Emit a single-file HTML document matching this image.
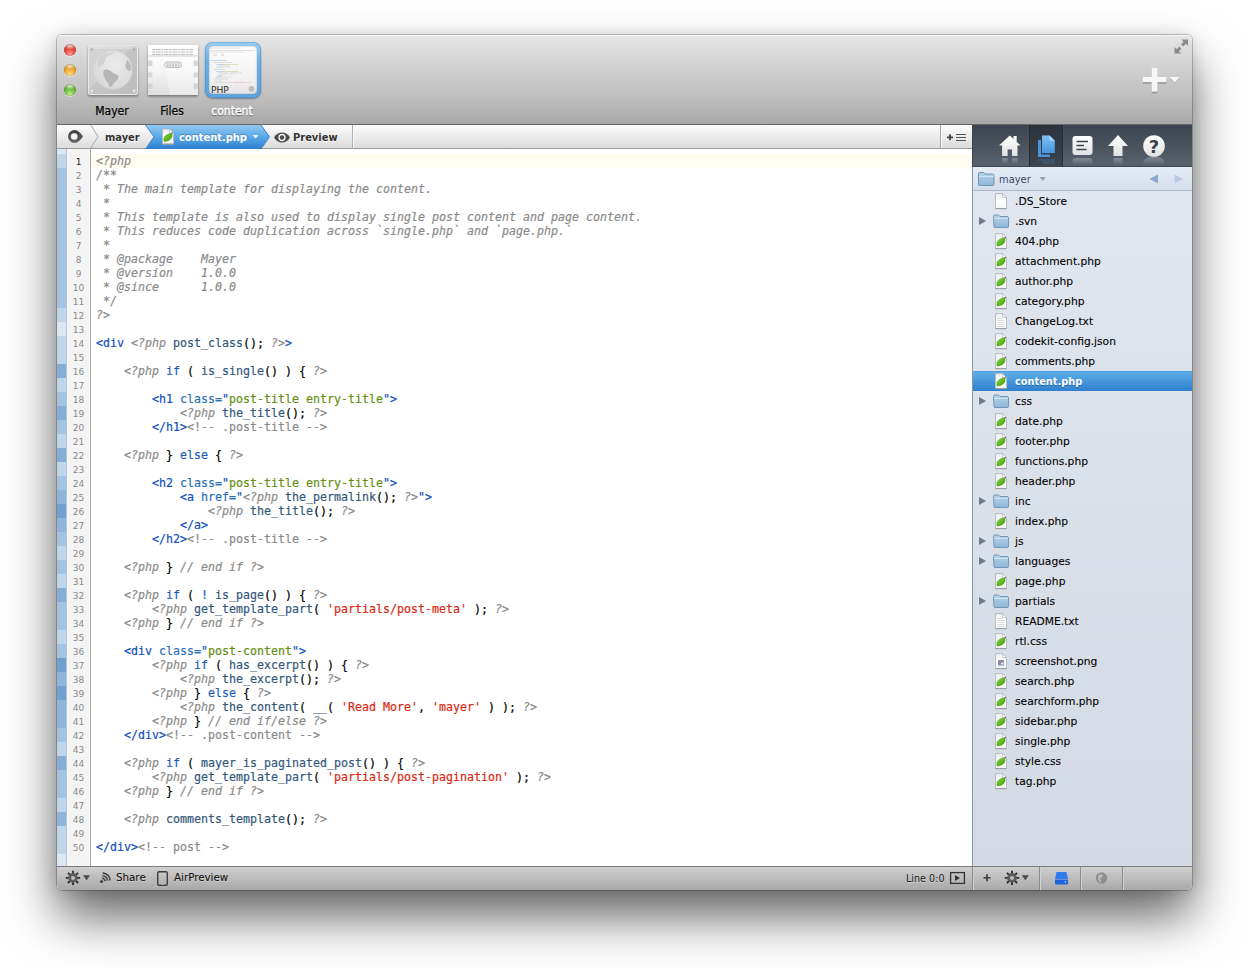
<!DOCTYPE html>
<html lang="en">
<head>
<meta charset="utf-8">
<title>Coda 2 – content.php</title>
<style>
html,body{margin:0;padding:0}
body{width:1249px;height:969px;background:#fff;position:relative;overflow:hidden;font-family:"DejaVu Sans Condensed","DejaVu Sans","Liberation Sans",sans-serif;font-size:12px;color:#111}
#shadow{position:absolute;left:57px;top:35px;width:1135px;height:855px;border-radius:5px;
  box-shadow:0 0 0 1px rgba(0,0,0,.21),0 27px 50px rgba(0,0,0,.6),0 2px 16px rgba(0,0,0,.13)}
#win{position:absolute;left:57px;top:35px;width:1135px;height:855px;border-radius:5px;overflow:hidden;background:#fff}
#win *{box-sizing:border-box}
.abs{position:absolute}
/* toolbar */
#toolbar{position:absolute;left:0;top:0;width:1135px;height:90px;background:linear-gradient(#e6e6e6,#d9d9d9 22%,#bdbdbd 72%,#a8a8a8);border-bottom:1px solid #666;box-shadow:inset 0 1px 0 #f6f6f6}
.tl{position:absolute;left:7px;width:12px;height:12px;border-radius:50%;box-shadow:0 1px 0 rgba(255,255,255,.45),inset 0 0 1px rgba(0,0,0,.5)}
.lbl{position:absolute;top:69px;font-size:12px;line-height:14px;text-align:center;width:70px;color:#000;-webkit-text-stroke:.25px #000;text-shadow:0 1px 0 rgba(255,255,255,.4)}
/* path bar */
#pathbar{position:absolute;left:0;top:90px;width:916px;height:24px;background:linear-gradient(#fcfcfc,#ececec 50%,#dcdcdc);border-bottom:1px solid #9a9a9a;font-weight:bold;font-size:11px}
.pb{top:0;line-height:25px;font-size:11px;font-weight:bold;font-family:"DejaVu Sans Condensed","DejaVu Sans",sans-serif}
/* editor */
#editor{position:absolute;left:0;top:114px;width:916px;height:717px;background:#fff}
#bar{position:absolute;left:0;top:0;width:9px;height:717px;background:#dbe7f3}
#bar i{display:block;height:14px}
#bar .pad{height:5px;background:#dbe7f3}
#nums{position:absolute;left:9px;top:0;width:25px;height:717px;background:#f4f4f4;border-right:1px solid #a9a9a9;border-left:1px solid #b3c7db;padding-top:5px}
#nums b{display:block;height:14px;line-height:16px;font-weight:normal;font-size:9px;text-align:center;color:#8a8a8a;font-family:"DejaVu Sans","Liberation Sans",sans-serif}
#nums b.cur{color:#222}
#code{position:absolute;left:34px;top:5px;width:882px;font-family:"DejaVu Sans Mono","Liberation Mono",monospace;font-size:11.63px;line-height:14px;color:#000;-webkit-text-stroke:.2px}
#code .ln{height:14px;padding-left:5px;white-space:pre}
#code .hl{background:#fffdf0}
.p{color:#8a8a8a;font-style:italic}
.c{color:#8a8a8a}
.t{color:#1050bc}
.a{color:#2a70b8}
.s{color:#668f14}
.k{color:#1c5cc0}
.f{color:#33587a}
.b{color:#000}
.r{color:#dc2a12}
/* sidebar */
#side{position:absolute;left:915px;top:90px;width:220px;height:741px;background:linear-gradient(#e2e7ef,#d3dae3);border-left:1px solid #8e959d}
#sidehead{position:absolute;left:-1px;top:0;width:220px;height:42px;border-left:1px solid #3a424c;background:linear-gradient(#3d4550,#49525d 50%,#5a6470);box-shadow:inset 0 -1px 0 #3b434d}
#crumb{position:absolute;left:0;top:42px;width:219px;height:24px;background:linear-gradient(#e6ecf5,#d4deec);border-bottom:1px solid #a9b8cc;color:#3a4a66;font-size:12px}
#files{position:absolute;left:0;top:66px;width:219px}
.row{position:relative;height:20px;line-height:21px;font-family:"DejaVu Sans","Liberation Sans",sans-serif;font-size:10.7px;color:#000;-webkit-text-stroke:.1px #000;white-space:nowrap}
.row span{position:absolute;left:42px;top:0}
.row .ic{position:absolute;left:19px;top:1px}
.row em{position:absolute;left:6px;top:6px;width:0;height:0;border-left:7.5px solid #6f7a8a;border-top:4.5px solid transparent;border-bottom:4.5px solid transparent}
.row.sel{background:linear-gradient(#5fb0ea,#2f7fd0);color:#fff;-webkit-text-stroke:0;font-weight:bold;font-family:"DejaVu Sans Condensed","DejaVu Sans",sans-serif;font-size:10.9px;text-shadow:0 1px 0 rgba(0,0,0,.3);box-shadow:inset 0 1px 0 #4a9ddf}
/* status */
#status{position:absolute;left:0;top:831px;width:1135px;height:24px;background:linear-gradient(#cfcfcf,#a9a9a9);border-top:1px solid #7d7d7d;font-size:11px;color:#222}
.st{top:0;line-height:20px;font-family:"DejaVu Sans","Liberation Sans",sans-serif;font-size:10.3px;color:#111;-webkit-text-stroke:.08px #111;text-shadow:0 1px 0 rgba(255,255,255,.35)}
</style>
</head>
<body>
<svg width="0" height="0" style="position:absolute">
<defs>
<linearGradient id="gfold" x1="0" y1="0" x2="0" y2="1"><stop offset="0" stop-color="#b7d3e8"/><stop offset="1" stop-color="#8fb6d6"/></linearGradient>
<linearGradient id="gpage" x1="0" y1="0" x2="0" y2="1"><stop offset="0" stop-color="#ececec"/><stop offset=".5" stop-color="#ffffff"/><stop offset="1" stop-color="#f4f4f4"/></linearGradient>
<linearGradient id="gleaf" x1="0" y1="0" x2="1" y2="1"><stop offset="0" stop-color="#86d136"/><stop offset=".5" stop-color="#5fbd1f"/><stop offset="1" stop-color="#3f9a12"/></linearGradient>
<symbol id="i-blank" viewBox="0 0 18 18"><path d="M3.5 1.5h7l4 4v11h-11z" fill="url(#gpage)" stroke="#b4b8bd" stroke-width=".9"/><path d="M10.5 1.5v4h4z" fill="#fdfdfd" stroke="#b4b8bd" stroke-width=".7"/><path d="M3.3 16.7h11.4" stroke="#8f959c" stroke-width=".9"/></symbol>
<symbol id="i-txt" viewBox="0 0 18 18"><path d="M3.5 1.5h7l4 4v11h-11z" fill="url(#gpage)" stroke="#b4b8bd" stroke-width=".9"/><path d="M10.5 1.5v4h4z" fill="#fdfdfd" stroke="#b4b8bd" stroke-width=".7"/><path d="M3.3 16.7h11.4" stroke="#8f959c" stroke-width=".9"/><path d="M5.5 6.5h4M5.5 8.5h7M5.500 10.5h7M5.5 12.5h7M5.5 14.5h7" stroke="#d9d9d9" stroke-width=".9"/></symbol>
<symbol id="i-png" viewBox="0 0 18 18"><path d="M3.5 1.5h7l4 4v11h-11z" fill="url(#gpage)" stroke="#b4b8bd" stroke-width=".9"/><path d="M10.5 1.5v4h4z" fill="#fdfdfd" stroke="#b4b8bd" stroke-width=".7"/><path d="M3.3 16.7h11.4" stroke="#8f959c" stroke-width=".9"/><rect x="6" y="8" width="6" height="5.5" fill="#7d8fb5"/><rect x="7" y="9" width="2" height="2" fill="#c87070"/><rect x="9" y="10.5" width="2.5" height="2" fill="#e8e8f0"/></symbol>
<symbol id="i-leaf" viewBox="0 0 18 18"><path d="M3.5 1.5h7l4 4v11h-11z" fill="url(#gpage)" stroke="#b4b8bd" stroke-width=".9"/><path d="M10.5 1.5v4h4z" fill="#fdfdfd" stroke="#b4b8bd" stroke-width=".7"/><path d="M3.3 16.7h11.4" stroke="#8f959c" stroke-width=".9"/><path d="M5.1 14C4 9.6 6.2 6.6 12.8 5.9C14 10 11.6 13.4 5.1 14z" fill="url(#gleaf)" stroke="#3f8f12" stroke-width=".5"/><path d="M12.5 6.1l1.400-1" stroke="#4a4a3a" stroke-width="1"/></symbol>
<symbol id="i-folder" viewBox="0 0 18 18"><path d="M1.500 4.500q0-1.500 1.500-1.500h3.500l1.500 1.500h7q1.500 0 1.500 1.500v8.500q0 1-1 1h-12.500q-1 0-1-1z" fill="url(#gfold)" stroke="#6f97b8"/><path d="M2 6.500h14" stroke="#d3e5f2"/></symbol>
</defs>
</svg>
<div id="shadow"></div>
<div id="win">
  <div id="toolbar">
    <div class="tl" style="top:9px;background:radial-gradient(ellipse 55% 30% at 50% 16%,rgba(255,255,255,.8),rgba(255,255,255,0)),radial-gradient(circle at 50% 88%,#ffa093,#e6453c 48%,#a8271f)"></div>
    <div class="tl" style="top:29px;background:radial-gradient(ellipse 55% 30% at 50% 16%,rgba(255,255,255,.8),rgba(255,255,255,0)),radial-gradient(circle at 50% 88%,#ffe08a,#f2a52c 48%,#b06e0c)"></div>
    <div class="tl" style="top:49px;background:radial-gradient(ellipse 55% 30% at 50% 16%,rgba(255,255,255,.8),rgba(255,255,255,0)),radial-gradient(circle at 50% 88%,#c3ee92,#6dbd3c 48%,#39821a)"></div>

    <svg class="abs" style="left:27px;top:7px" width="58" height="60" viewBox="-4 -3 58 60">
      <defs>
        <linearGradient id="gplate" x1="0" y1="0" x2="1" y2="1"><stop offset="0" stop-color="#d6d6d6"/><stop offset=".45" stop-color="#cfcfcf"/><stop offset=".46" stop-color="#c6c6c6"/><stop offset="1" stop-color="#bcbcbc"/></linearGradient>
        <radialGradient id="gglobe" cx=".55" cy=".35" r=".75"><stop offset="0" stop-color="#ececec"/><stop offset="1" stop-color="#d6d6d6"/></radialGradient>
        <filter id="fsh" x="-20%" y="-20%" width="140%" height="150%"><feGaussianBlur stdDeviation="1.200"/></filter>
      </defs>
      <rect x="0" y="1.500" width="50" height="50" rx="1.500" fill="#000" opacity=".35" filter="url(#fsh)"/>
      <rect x=".5" y=".5" width="49" height="49" rx="1.500" fill="url(#gplate)" stroke="#e9e9e9"/>
      <path d="M1 1h48v3l-48 0z" fill="#fff" opacity=".25"/>
      <circle cx="3.800" cy="4.500" r="1.400" fill="#b4b4b4"/><circle cx="46.200" cy="4.500" r="1.400" fill="#b4b4b4"/>
      <circle cx="3.800" cy="46" r="1.400" fill="#e6e6e6"/><circle cx="46.200" cy="46" r="1.400" fill="#e6e6e6"/>
      <circle cx="25" cy="25" r="19" fill="url(#gglobe)" stroke="#dedede" stroke-width=".6"/>
      <path d="M13 10.500q-3.500 3.500-3.500 9.500l1.500 3 2-2.500 2.500-1.500 1.500-2.500.5-3.500 3.500-3 4-1.500q-7-1-12 2z" fill="#d2d2d2"/>
      <path d="M15.400 25.500l3.100-1.200 3.700 1.500 3.100 2.200 5.500 3.100-1.200 3.700-3.100 2.500-3.100 4.300-1.900.3-1.200-3.400-3.100-3.700-1.800-5z" fill="#b6b6b6"/>
      <path d="M38.900 14.400l1.800 1.800 1.900 3.700.6 4.400-1.200 1.800-2.500-.6-1.900-3.100-.3-2.500 1-2.400z" fill="#bcbcbc"/>
      <path d="M21 8.500l3.500-1.200 1.500.7-3.500 1.800z" fill="#cfcfcf"/>
    </svg>
    <svg class="abs" style="left:87px;top:7px" width="58" height="60" viewBox="-4 -3 58 60">
      <defs>
        <linearGradient id="gfiles" x1="0" y1="0" x2="0" y2="1"><stop offset="0" stop-color="#ffffff"/><stop offset=".5" stop-color="#f6f6f6"/><stop offset="1" stop-color="#dedede"/></linearGradient>
      </defs>
      <rect x="0" y="1.500" width="50" height="50" rx="1" fill="#000" opacity=".4" filter="url(#fsh)"/>
      <rect x="0" y="0" width="50" height="50" fill="url(#gfiles)"/>
      <path d="M14 11h36v39h-28z" fill="#fff" opacity=".35"/>
      <path d="M4 4.500h41M4 7h41M4 9.500h41" stroke="#444" stroke-width=".7" stroke-dasharray="3 .7 5 .7 2 .7 4 .7" opacity=".5"/>
      <path d="M0 11h50" stroke="#d0d0d0"/>
      <rect x="0" y="15.500" width="4.500" height="5.500" fill="#d9d9d9"/><rect x="45.500" y="15.500" width="4.500" height="5.500" fill="#d9d9d9"/>
      <rect x="0" y="27.500" width="4.500" height="5" fill="#d9d9d9"/><rect x="45.500" y="27.500" width="4.500" height="5" fill="#d9d9d9"/>
      <rect x="0" y="38.500" width="4.500" height="5.500" fill="#d4d4d4"/><rect x="45.500" y="38.500" width="4.500" height="5.500" fill="#d4d4d4"/>
      <rect x="16.500" y="17" width="17" height="5.500" rx="2.750" fill="#f4f4f4" stroke="#bdbdbd"/>
      <path d="M18.500 19h13M18.500 20.800h13" stroke="#999" stroke-width=".8" stroke-dasharray="2 .8"/>
    </svg>
    <div class="abs" style="left:148px;top:7px;width:56px;height:56px;border-radius:8px;background:linear-gradient(#98cdf2,#6ab1e8 35%,#5aa3df);box-shadow:0 1px 2px rgba(0,0,0,.35),inset 0 0 0 .5px rgba(40,110,180,.5)"></div>
    <div class="abs" id="thumb" style="left:152px;top:11px;width:48px;height:48px;border-radius:4px;background:linear-gradient(#fdfdfd,#f2f2f2 70%,#e4e4e4);box-shadow:inset 0 0 2px rgba(0,0,0,.35);overflow:hidden">
      <svg width="48" height="48" viewBox="0 0 48 48" style="position:absolute;left:0;top:0">
        <g stroke-width=".8" opacity=".6">
        <path d="M1 2h30M2 4.500h44M2 6h34M4 8h4M12 8h3M4 9.500h4M12 9.500h3" stroke="#c9c9c9"/>
        <path d="M2 14.500h16" stroke="#8fb0d8"/>
        <path d="M5 16.500h18" stroke="#bbb"/>
        <path d="M7 18.500h8" stroke="#8fb0d8"/><path d="M15 18.500h14" stroke="#b8cf7a"/>
        <path d="M9 19.800h12" stroke="#c4c4c4"/><path d="M7 21.200h7" stroke="#8fb0d8"/><path d="M14 21.200h8" stroke="#ccc"/>
        <path d="M5 23.500h11" stroke="#bbb"/>
        <path d="M7 25.500h8" stroke="#8fb0d8"/><path d="M15 25.500h14" stroke="#b8cf7a"/>
        <path d="M9 26.800h10M21 26.800h12" stroke="#c4c4c4"/><path d="M11 28.200h14" stroke="#ccc"/>
        <path d="M9 29.600h4" stroke="#8fb0d8"/><path d="M7 31h6" stroke="#8fb0d8"/><path d="M13 31h10" stroke="#ccc"/>
        <path d="M5 33h14" stroke="#bbb"/>
        <path d="M5 35h8M7 36.300h16" stroke="#c4c4c4"/><path d="M24 36.300h13" stroke="#e9a090"/><path d="M38 36.300h4" stroke="#c4c4c4"/>
        </g>
        <circle cx="42.500" cy="42.800" r="2.900" fill="#bdbdbd"/>
      </svg>
      <div style="position:absolute;left:2px;top:38.500px;font-size:9.1px;line-height:11px;color:#2a2a2a;font-family:'DejaVu Sans','Liberation Sans',sans-serif">PHP</div>
    </div>
    <svg class="abs" style="left:1116px;top:3px" width="17" height="17" viewBox="0 0 17 17">
      <path d="M8.500 1.500h6.500v6.500l-2.200-2.200-2.600 2.600-2.100-2.100 2.600-2.600z" fill="#8b8b8b"/>
      <path d="M8 15.500h-6.500v-6.500l2.200 2.200 2.600-2.600 2.100 2.100-2.600 2.600z" fill="#8b8b8b"/>
    </svg>
    <svg class="abs" style="left:1084px;top:31px" width="42" height="28" viewBox="0 0 42 28">
      <path d="M10.700 3h5.800v9h9v5h-9v9.400h-5.800v-9.400h-8.700v-5h8.700z" fill="#000" opacity=".18" transform="translate(0,1)"/>
      <path d="M10.700 2h5.800v9h9v5h-9v9.400h-5.800v-9.400h-8.700v-5h8.700z" fill="#f7f7f7"/>
      <path d="M28.700 12h10.200l-5.100 5.700z" fill="#000" opacity=".18"/>
      <path d="M28.700 11h10.200l-5.100 5.700z" fill="#f7f7f7"/>
    </svg>
    <div class="lbl" style="left:20px">Mayer</div>
    <div class="lbl" style="left:80px">Files</div>
    <div class="lbl" style="left:140px;color:#fff;-webkit-text-stroke:.4px #fff;text-shadow:0 1px 1px rgba(0,0,0,.6)">content</div>
  </div>
  <div id="pathbar">
    <svg class="abs" style="left:0;top:0" width="916" height="24" viewBox="0 0 916 24">
      <defs>
        <linearGradient id="gblue" x1="0" y1="0" x2="0" y2="1"><stop offset="0" stop-color="#93c9f1"/><stop offset=".5" stop-color="#5aa8e6"/><stop offset="1" stop-color="#2d7fd0"/></linearGradient>
        <linearGradient id="geye" x1="0" y1="0" x2="0" y2="1"><stop offset="0" stop-color="#3e3e3e"/><stop offset="1" stop-color="#6a6a6a"/></linearGradient>
      </defs>
      <path d="M89 0l8.300 11.500-8.300 12.500h8.300l-8.300 0z" fill="none"/>
      <path d="M33.500 -.5l7.500 12-7.500 12" fill="none" stroke="#a8a8a8"/>
      <path d="M88.500 0h115.500l8.500 11.800-8.500 12.200h-115.500l8.500-12.200z" fill="url(#gblue)"/>
      <path d="M88.500 0l8.500 11.800-8.500 12.200M204 0l8.500 11.800-8.500 12.200" fill="none" stroke="#3a86cf" stroke-width="1"/>
      <path d="M295.500 0v24" stroke="#b0b0b0"/><path d="M296.500 0v23" stroke="#fafafa"/>
      <!-- reveal icon -->
      <path d="M17.500 5a6.500 6.500 0 1 0 0 13c3.500 0 6-3.200 8.500-6.500-2.500-3.300-5-6.500-8.500-6.500z" fill="url(#geye)"/>
      <circle cx="17.200" cy="11.500" r="3.300" fill="#f6f6f6"/>
      <!-- file icon -->
      <use href="#i-leaf" x="102" y="2.5" width="18" height="18"/>
      <path d="M195.500 10h6l-3 3.600z" fill="#e9f3fc"/>
      <!-- preview eye -->
      <path d="M217 12.500c2-3.400 4.800-5 8-5s6 1.600 8 5c-2 3.400-4.800 5-8 5s-6-1.600-8-5z" fill="#4a4a4a"/>
      <circle cx="225" cy="12.500" r="3.700" fill="#f1f1f1"/><circle cx="225" cy="12.500" r="2.200" fill="#4a4a4a"/>
      <!-- right button -->
      <path d="M883.500 0v24" stroke="#a5a5a5"/><path d="M884.500 0v23" stroke="#fafafa"/>
      <path d="M890 12.300h6M893 9.300v6" stroke="#444" stroke-width="1.800"/>
      <path d="M899 9.500h10M899 12.500h10M899 15.500h10" stroke="#555" stroke-width="1.200"/>
    </svg>
    <div class="abs pb" style="left:48px;color:#333;text-shadow:0 1px 0 #fff">mayer</div>
    <div class="abs pb" style="left:122px;color:#fff;text-shadow:0 -1px 0 rgba(0,0,0,.25)">content.php</div>
    <div class="abs pb" style="left:236px;color:#333;text-shadow:0 1px 0 #fff">Preview</div>
  </div>
  <div id="editor">
    <div id="bar"><div class="pad"></div><i style="background:#bfd5ea"></i><i style="background:#a3c3e0"></i><i style="background:#a3c3e0"></i><i style="background:#a3c3e0"></i><i style="background:#a3c3e0"></i><i style="background:#a3c3e0"></i><i style="background:#a3c3e0"></i><i style="background:#a3c3e0"></i><i style="background:#a3c3e0"></i><i style="background:#a3c3e0"></i><i style="background:#a3c3e0"></i><i style="background:#bfd5ea"></i><i style="background:#dbe7f3"></i><i style="background:#bfd5ea"></i><i style="background:#bfd5ea"></i><i style="background:#86add6"></i><i style="background:#bfd5ea"></i><i style="background:#a3c3e0"></i><i style="background:#86add6"></i><i style="background:#a3c3e0"></i><i style="background:#bfd5ea"></i><i style="background:#86add6"></i><i style="background:#bfd5ea"></i><i style="background:#a3c3e0"></i><i style="background:#90b5da"></i><i style="background:#6fa0d0"></i><i style="background:#90b5da"></i><i style="background:#a3c3e0"></i><i style="background:#bfd5ea"></i><i style="background:#a3c3e0"></i><i style="background:#bfd5ea"></i><i style="background:#86add6"></i><i style="background:#a3c3e0"></i><i style="background:#a3c3e0"></i><i style="background:#bfd5ea"></i><i style="background:#a3c3e0"></i><i style="background:#6fa0d0"></i><i style="background:#90b5da"></i><i style="background:#6fa0d0"></i><i style="background:#90b5da"></i><i style="background:#90b5da"></i><i style="background:#a3c3e0"></i><i style="background:#bfd5ea"></i><i style="background:#86add6"></i><i style="background:#a3c3e0"></i><i style="background:#a3c3e0"></i><i style="background:#bfd5ea"></i><i style="background:#90b5da"></i><i style="background:#bfd5ea"></i><i style="background:#bfd5ea"></i></div>
    <div id="nums"><b class="cur">1</b><b>2</b><b>3</b><b>4</b><b>5</b><b>6</b><b>7</b><b>8</b><b>9</b><b>10</b><b>11</b><b>12</b><b>13</b><b>14</b><b>15</b><b>16</b><b>17</b><b>18</b><b>19</b><b>20</b><b>21</b><b>22</b><b>23</b><b>24</b><b>25</b><b>26</b><b>27</b><b>28</b><b>29</b><b>30</b><b>31</b><b>32</b><b>33</b><b>34</b><b>35</b><b>36</b><b>37</b><b>38</b><b>39</b><b>40</b><b>41</b><b>42</b><b>43</b><b>44</b><b>45</b><b>46</b><b>47</b><b>48</b><b>49</b><b>50</b></div>
    <div id="code">
<div class="ln hl"><span class="p">&lt;?php</span></div>
<div class="ln"><span class="p">/**</span></div>
<div class="ln"><span class="p"> * The main template for displaying the content.</span></div>
<div class="ln"><span class="p"> *</span></div>
<div class="ln"><span class="p"> * This template is also used to display single post content and page content.</span></div>
<div class="ln"><span class="p"> * This reduces code duplication across `single.php` and `page.php.`</span></div>
<div class="ln"><span class="p"> *</span></div>
<div class="ln"><span class="p"> * @package    Mayer</span></div>
<div class="ln"><span class="p"> * @version    1.0.0</span></div>
<div class="ln"><span class="p"> * @since      1.0.0</span></div>
<div class="ln"><span class="p"> */</span></div>
<div class="ln"><span class="p">?&gt;</span></div>
<div class="ln">&nbsp;</div>
<div class="ln"><span class="t">&lt;div</span> <span class="p">&lt;?php</span> <span class="f">post_class</span><span class="b">();</span> <span class="p">?&gt;</span><span class="t">&gt;</span></div>
<div class="ln">&nbsp;</div>
<div class="ln">    <span class="p">&lt;?php</span> <span class="k">if</span> <span class="b">(</span> <span class="f">is_single</span><span class="b">()</span> <span class="b">)</span> <span class="b">{</span> <span class="p">?&gt;</span></div>
<div class="ln">&nbsp;</div>
<div class="ln">        <span class="t">&lt;h1</span> <span class="a">class=</span><span class="t">"</span><span class="s">post-title entry-title</span><span class="t">"&gt;</span></div>
<div class="ln">            <span class="p">&lt;?php</span> <span class="f">the_title</span><span class="b">();</span> <span class="p">?&gt;</span></div>
<div class="ln">        <span class="t">&lt;/h1&gt;</span><span class="c">&lt;!-- .post-title --&gt;</span></div>
<div class="ln">&nbsp;</div>
<div class="ln">    <span class="p">&lt;?php</span> <span class="b">}</span> <span class="k">else</span> <span class="b">{</span> <span class="p">?&gt;</span></div>
<div class="ln">&nbsp;</div>
<div class="ln">        <span class="t">&lt;h2</span> <span class="a">class=</span><span class="t">"</span><span class="s">post-title entry-title</span><span class="t">"&gt;</span></div>
<div class="ln">            <span class="t">&lt;a</span> <span class="a">href=</span><span class="t">"</span><span class="p">&lt;?php</span> <span class="f">the_permalink</span><span class="b">();</span> <span class="p">?&gt;</span><span class="t">"&gt;</span></div>
<div class="ln">                <span class="p">&lt;?php</span> <span class="f">the_title</span><span class="b">();</span> <span class="p">?&gt;</span></div>
<div class="ln">            <span class="t">&lt;/a&gt;</span></div>
<div class="ln">        <span class="t">&lt;/h2&gt;</span><span class="c">&lt;!-- .post-title --&gt;</span></div>
<div class="ln">&nbsp;</div>
<div class="ln">    <span class="p">&lt;?php</span> <span class="b">}</span> <span class="p">// end if ?&gt;</span></div>
<div class="ln">&nbsp;</div>
<div class="ln">    <span class="p">&lt;?php</span> <span class="k">if</span> <span class="b">(</span> <span class="k">!</span> <span class="f">is_page</span><span class="b">()</span> <span class="b">)</span> <span class="b">{</span> <span class="p">?&gt;</span></div>
<div class="ln">        <span class="p">&lt;?php</span> <span class="f">get_template_part</span><span class="b">(</span> <span class="r">'partials/post-meta'</span> <span class="b">);</span> <span class="p">?&gt;</span></div>
<div class="ln">    <span class="p">&lt;?php</span> <span class="b">}</span> <span class="p">// end if ?&gt;</span></div>
<div class="ln">&nbsp;</div>
<div class="ln">    <span class="t">&lt;div</span> <span class="a">class=</span><span class="t">"</span><span class="s">post-content</span><span class="t">"&gt;</span></div>
<div class="ln">        <span class="p">&lt;?php</span> <span class="k">if</span> <span class="b">(</span> <span class="f">has_excerpt</span><span class="b">()</span> <span class="b">)</span> <span class="b">{</span> <span class="p">?&gt;</span></div>
<div class="ln">            <span class="p">&lt;?php</span> <span class="f">the_excerpt</span><span class="b">();</span> <span class="p">?&gt;</span></div>
<div class="ln">        <span class="p">&lt;?php</span> <span class="b">}</span> <span class="k">else</span> <span class="b">{</span> <span class="p">?&gt;</span></div>
<div class="ln">            <span class="p">&lt;?php</span> <span class="f">the_content</span><span class="b">(</span> <span class="f">__</span><span class="b">(</span> <span class="r">'Read More'</span><span class="b">,</span> <span class="r">'mayer'</span> <span class="b">)</span> <span class="b">);</span> <span class="p">?&gt;</span></div>
<div class="ln">        <span class="p">&lt;?php</span> <span class="b">}</span> <span class="p">// end if/else ?&gt;</span></div>
<div class="ln">    <span class="t">&lt;/div&gt;</span><span class="c">&lt;!-- .post-content --&gt;</span></div>
<div class="ln">&nbsp;</div>
<div class="ln">    <span class="p">&lt;?php</span> <span class="k">if</span> <span class="b">(</span> <span class="f">mayer_is_paginated_post</span><span class="b">()</span> <span class="b">)</span> <span class="b">{</span> <span class="p">?&gt;</span></div>
<div class="ln">        <span class="p">&lt;?php</span> <span class="f">get_template_part</span><span class="b">(</span> <span class="r">'partials/post-pagination'</span> <span class="b">);</span> <span class="p">?&gt;</span></div>
<div class="ln">    <span class="p">&lt;?php</span> <span class="b">}</span> <span class="p">// end if ?&gt;</span></div>
<div class="ln">&nbsp;</div>
<div class="ln">    <span class="p">&lt;?php</span> <span class="f">comments_template</span><span class="b">();</span> <span class="p">?&gt;</span></div>
<div class="ln">&nbsp;</div>
<div class="ln"><span class="t">&lt;/div&gt;</span><span class="c">&lt;!-- post --&gt;</span></div>
</div>
  </div>
  <div id="side">
    <div id="sidehead">
      <div class="abs" style="left:56px;top:0;width:34px;height:42px;background:linear-gradient(#2d333c,#333a44 50%,#3d454f);box-shadow:inset 1px 0 0 #282d35,inset -1px 0 0 #282d35"></div>
      <svg class="abs" style="left:0;top:0" width="218" height="42" viewBox="0 0 218 42">
        <defs>
          <linearGradient id="gw" x1="0" y1="0" x2="0" y2="1"><stop offset="0" stop-color="#ffffff"/><stop offset="1" stop-color="#e2e2e2"/></linearGradient>
          <linearGradient id="gb" x1="0" y1="0" x2="0" y2="1"><stop offset="0" stop-color="#79bdf3"/><stop offset="1" stop-color="#4a98e0"/></linearGradient>
          <linearGradient id="gref" x1="0" y1="0" x2="0" y2="1"><stop offset="0" stop-color="#fff" stop-opacity=".28"/><stop offset="1" stop-color="#fff" stop-opacity="0"/></linearGradient>
        </defs>
        <!-- home -->
        <path d="M26 20.500l10.800-10 3.700 3.400v-2.900h3.200v5.900l3.900 3.600h-3.100v10.500h-5.500v-6.500h-4.400v6.500h-5.500v-10.500z" fill="url(#gw)"/>
        <path d="M29.100 33h5.500v6h-5.500zM39 33h5.500v6h-5.500z" fill="url(#gref)"/>
        <!-- files -->
        <path d="M65 15h3v14.500h9v2.500h-12z" fill="#4b93da"/>
        <path d="M69 10.500h7.500l5.300 5.300v12.200h-12.800z" fill="url(#gb)"/>
        <path d="M76.500 10.500v5.300h5.300z" fill="#a9d6fa"/>
        <path d="M65 34h12v2h-12z M69 34h12.800v5h-12.800z" fill="#4b93da" opacity=".22"/>
        <!-- list -->
        <rect x="99.500" y="11" width="20" height="19" rx="3" fill="url(#gw)"/>
        <path d="M103.500 16.500h11.500M103.500 20.500h7.500M103.500 24.500h10" stroke="#3c4450" stroke-width="1.700"/>
        <rect x="99.500" y="33" width="20" height="7" rx="3" fill="url(#gref)"/>
        <!-- up arrow -->
        <path d="M145 10l10 11h-5.500v10h-9v-10h-5.500z" fill="url(#gw)"/>
        <path d="M140.500 33h9v7h-9z" fill="url(#gref)"/>
        <!-- help -->
        <circle cx="181" cy="21" r="10.800" fill="url(#gw)"/>
        <path d="M170.500 36a10.800 6 0 0 1 21 0v4h-21z" fill="url(#gref)"/>
        <text x="181" y="27.500" text-anchor="middle" font-family="DejaVu Sans,Liberation Sans,sans-serif" font-weight="bold" font-size="18" fill="#39414d">?</text>
      </svg>
    </div>
    <div id="crumb">
      <svg class="abs" style="left:0;top:0" width="218" height="24" viewBox="0 0 218 24">
        <path d="M5.500 7q0-1.500 1.500-1.500h3.500l1.500 1.500h7.500q1.500 0 1.500 1.500v9q0 1-1 1h-13.500q-1 0-1-1z" fill="url(#gfold)" stroke="#6f97b8"/>
        <path d="M6 9.500h14.500" stroke="#d3e5f2"/>
        <path d="M66.500 10h6.400l-3.200 4z" fill="#9a9fa8"/>
        <path d="M185 7.500v9l-8.500-4.500z" fill="#8ca6cf"/>
        <path d="M201.500 7.500v9l8.500-4.500z" fill="#b9c9e2"/>
      </svg>
      <div class="abs" style="left:26px;top:0;line-height:25px;font-size:11px">mayer</div>
    </div>
    <div id="files">
<div class="row"><svg class="ic" width="18" height="18"><use href="#i-blank"/></svg><span>.DS_Store</span></div>
<div class="row"><em></em><svg class="ic" width="18" height="18"><use href="#i-folder"/></svg><span>.svn</span></div>
<div class="row"><svg class="ic" width="18" height="18"><use href="#i-leaf"/></svg><span>404.php</span></div>
<div class="row"><svg class="ic" width="18" height="18"><use href="#i-leaf"/></svg><span>attachment.php</span></div>
<div class="row"><svg class="ic" width="18" height="18"><use href="#i-leaf"/></svg><span>author.php</span></div>
<div class="row"><svg class="ic" width="18" height="18"><use href="#i-leaf"/></svg><span>category.php</span></div>
<div class="row"><svg class="ic" width="18" height="18"><use href="#i-txt"/></svg><span>ChangeLog.txt</span></div>
<div class="row"><svg class="ic" width="18" height="18"><use href="#i-leaf"/></svg><span>codekit-config.json</span></div>
<div class="row"><svg class="ic" width="18" height="18"><use href="#i-leaf"/></svg><span>comments.php</span></div>
<div class="row sel"><svg class="ic" width="18" height="18"><use href="#i-leaf"/></svg><span>content.php</span></div>
<div class="row"><em></em><svg class="ic" width="18" height="18"><use href="#i-folder"/></svg><span>css</span></div>
<div class="row"><svg class="ic" width="18" height="18"><use href="#i-leaf"/></svg><span>date.php</span></div>
<div class="row"><svg class="ic" width="18" height="18"><use href="#i-leaf"/></svg><span>footer.php</span></div>
<div class="row"><svg class="ic" width="18" height="18"><use href="#i-leaf"/></svg><span>functions.php</span></div>
<div class="row"><svg class="ic" width="18" height="18"><use href="#i-leaf"/></svg><span>header.php</span></div>
<div class="row"><em></em><svg class="ic" width="18" height="18"><use href="#i-folder"/></svg><span>inc</span></div>
<div class="row"><svg class="ic" width="18" height="18"><use href="#i-leaf"/></svg><span>index.php</span></div>
<div class="row"><em></em><svg class="ic" width="18" height="18"><use href="#i-folder"/></svg><span>js</span></div>
<div class="row"><em></em><svg class="ic" width="18" height="18"><use href="#i-folder"/></svg><span>languages</span></div>
<div class="row"><svg class="ic" width="18" height="18"><use href="#i-leaf"/></svg><span>page.php</span></div>
<div class="row"><em></em><svg class="ic" width="18" height="18"><use href="#i-folder"/></svg><span>partials</span></div>
<div class="row"><svg class="ic" width="18" height="18"><use href="#i-txt"/></svg><span>README.txt</span></div>
<div class="row"><svg class="ic" width="18" height="18"><use href="#i-leaf"/></svg><span>rtl.css</span></div>
<div class="row"><svg class="ic" width="18" height="18"><use href="#i-png"/></svg><span>screenshot.png</span></div>
<div class="row"><svg class="ic" width="18" height="18"><use href="#i-leaf"/></svg><span>search.php</span></div>
<div class="row"><svg class="ic" width="18" height="18"><use href="#i-leaf"/></svg><span>searchform.php</span></div>
<div class="row"><svg class="ic" width="18" height="18"><use href="#i-leaf"/></svg><span>sidebar.php</span></div>
<div class="row"><svg class="ic" width="18" height="18"><use href="#i-leaf"/></svg><span>single.php</span></div>
<div class="row"><svg class="ic" width="18" height="18"><use href="#i-leaf"/></svg><span>style.css</span></div>
<div class="row"><svg class="ic" width="18" height="18"><use href="#i-leaf"/></svg><span>tag.php</span></div>
</div>
  </div>
  <div id="status">
    <svg class="abs" style="left:0;top:0" width="1135" height="23" viewBox="0 0 1135 23">
      <defs>
        <g id="gear"><path d="M0-7.2v3.500M0 7.200v-3.500M-7.200 0h3.500M7.200 0h-3.500M-5.100-5.100l2.400 2.400M5.100 5.100l-2.400-2.400M-5.100 5.100l2.400-2.400M5.100-5.100l-2.400 2.400" stroke="#2e2e2e" stroke-width="1.900"/><circle r="3.400" fill="none" stroke="#5c5c5c" stroke-width="2.800"/></g>
      </defs>
      <use href="#gear" x="16" y="10.900"/>
      <path d="M26 8.200h7l-3.500 5z" fill="#4a4a4a"/>
      <!-- share -->
      <circle cx="44.500" cy="14.500" r="1.600" fill="#444"/>
      <path d="M45.00 11.04A3.6 3.6 0 0 1 48.06 14.10M45.36 8.46A6.2 6.2 0 0 1 50.64 13.74M45.72 5.89A8.8 8.8 0 0 1 53.21 13.38" fill="none" stroke="#4a4a4a" stroke-width="1.600"/>
      <!-- airpreview -->
      <rect x="100.700" y="4.700" width="9.600" height="13.600" rx="1.300" fill="none" stroke="#3d3d3d" stroke-width="1.400"/>
      <path d="M104.500 17.500h2" stroke="#bbb" stroke-width="1.200"/>
      <!-- line box -->
      <rect x="893.600" y="5.600" width="13.800" height="10.800" fill="none" stroke="#333" stroke-width="1.300"/>
      <path d="M898 8v6l5-3z" fill="#333"/>
      <path d="M915.500 0v23" stroke="#8a8a8a"/><path d="M916.500 0v23" stroke="#d2d2d2"/>
      <path d="M926.500 10.800h7M930 7.300v7" stroke="#3d3d3d" stroke-width="1.600"/>
      <use href="#gear" x="955" y="10.900"/>
      <path d="M964.800 8.200h7l-3.500 5z" fill="#4a4a4a"/>
      <path d="M982.500 0v23M1023.500 0v23M1065.500 0v23" stroke="#8a8a8a"/><path d="M983.500 0v23M1024.500 0v23M1066.500 0v23" stroke="#d2d2d2"/>
      <path d="M999.500 5h10l1.500 7h-13z" fill="#2f7bf0"/><rect x="998" y="12.500" width="13" height="5" rx=".8" fill="#1e62dd"/><circle cx="1008.500" cy="15" r=".8" fill="#cfe0ff"/>
      <circle cx="1044.500" cy="11" r="5.700" fill="#8d8d8d"/><path d="M1041 8.500l3-1.500 2 1-1 2.500-2 1.500 1.500 3-1.500.5-2-3z" fill="#b9b9b9"/>
    </svg>
    <div class="abs st" style="left:59px">Share</div>
    <div class="abs st" style="left:117px">AirPreview</div>
    <div class="abs st" style="left:849px;top:2px;font-size:9.6px;-webkit-text-stroke:0;color:#222">Line 0:0</div>
  </div>
</div>
</body>
</html>
